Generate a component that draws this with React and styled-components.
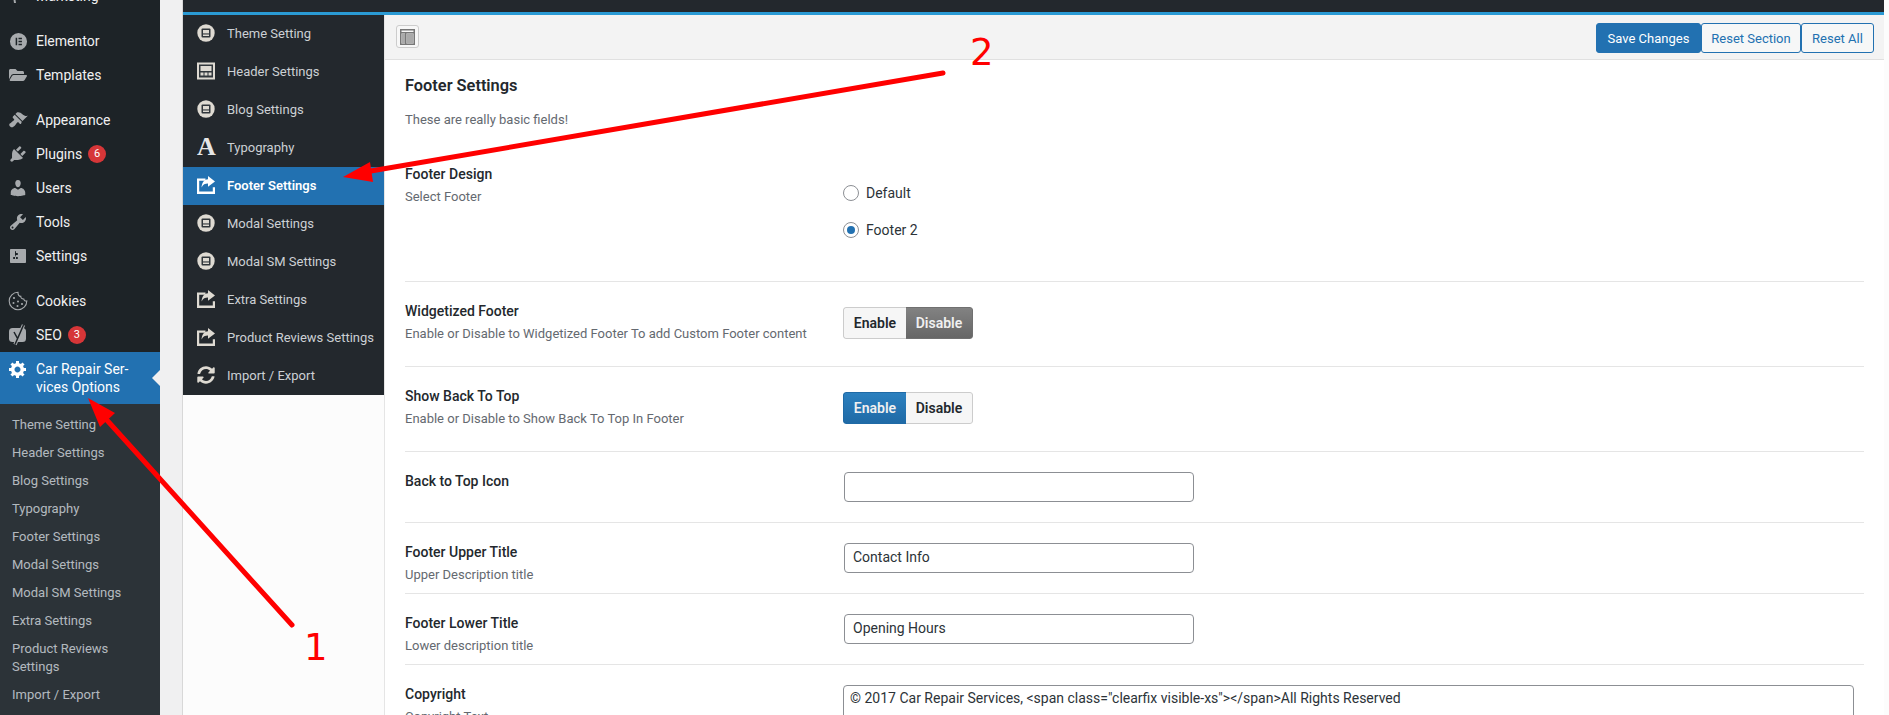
import React from 'react'
import styled, { createGlobalStyle } from 'styled-components'
import { FaFolderOpen, FaSyncAlt } from 'react-icons/fa'

const GlobalStyle = createGlobalStyle`
    html, body {
        margin: 0;
        height: 100%;
        overflow: hidden;
        background: #f0f0f1;
        font-family: Roboto, "Liberation Sans", sans-serif;
    }
    * {
        box-sizing: border-box;
    }
`

const Page = styled.div`
    position: relative;
    display: flex;
    width: 1889px;
    height: 715px;
    overflow: hidden;
`

const AdminMenu = styled.nav`
    flex: 0 0 160px;
    height: 736px;
    margin-top: -21px;
    background: #1d2327;
`

const MenuItem = styled.div`
    position: relative;
    display: flex;
    margin-top: ${(p) => (p.$sep ? '11px' : '0')};
    padding: 8px 0;
    font-size: 14px;
    line-height: 18px;
    color: ${(p) => (p.$active ? '#fff' : '#f0f0f1')};
    background: ${(p) => (p.$active ? '#2271b1' : 'transparent')};
`

const MenuIcon = styled.span`
    flex: 0 0 36px;
    display: flex;
    justify-content: center;
    align-items: center;
    height: 18px;
    color: ${(p) => (p.$active ? '#fff' : '#a7aaad')};
    svg {
        display: block;
        fill: currentColor;
    }
`

const Badge = styled.span`
    display: inline-block;
    width: 18px;
    height: 18px;
    margin-left: 6px;
    border-radius: 50%;
    background: #d63638;
    color: #fff;
    font-size: 11px;
    line-height: 18px;
    text-align: center;
    vertical-align: top;
`

const CurrentArrow = styled.span`
    position: absolute;
    right: 0;
    top: 18px;
    border: 8px solid transparent;
    border-right-color: #f0f0f1;
    border-left-width: 0;
`

const SubMenu = styled.div`
    padding: 7px 0;
    background: #2c3338;
`

const SubItem = styled.div`
    padding: 5px 12px;
    font-size: 13px;
    line-height: 18px;
    color: rgba(240, 246, 252, 0.7);
`

const Panel = styled.main`
    flex: 0 0 1702px;
    margin-left: 22px;
    height: 715px;
    border-left: 1px solid #d8d8d8;
    background: #fcfcfc;
`

const Gutter = styled.div`
    flex: 1;
    background: #fcfcfc;
`

const PanelTop = styled.div`
    height: 15px;
    background: #23282d;
    border-bottom: 3px solid #2a9ad4;
`

const PanelBody = styled.div`
    display: flex;
    align-items: flex-start;
`

const Sidebar = styled.ul`
    flex: 0 0 201px;
    margin: 0;
    padding: 0;
    list-style: none;
    background: #23282d;
`

const SideItem = styled.li`
    display: flex;
    align-items: center;
    height: 38px;
    padding: 0 0 2px 14px;
    font-size: 13px;
    font-weight: ${(p) => (p.$active ? 600 : 400)};
    color: ${(p) => (p.$active ? '#fff' : '#ccd0d4')};
    background: ${(p) => (p.$active ? '#2271b1' : 'transparent')};
`

const SideIcon = styled.span`
    flex: 0 0 30px;
    height: 18px;
    display: flex;
    align-items: center;
    color: ${(p) => (p.$active ? '#fff' : '#dedad2')};
    svg {
        display: block;
    }
`

const TypeGlyph = styled.span`
    width: 18px;
    font-family: "Liberation Serif", serif;
    font-weight: 700;
    font-size: 26px;
    line-height: 18px;
    text-align: center;
    color: #e6e6e6;
`

const Content = styled.section`
    flex: 1;
    min-width: 0;
    height: 700px;
    border-left: 1px solid #e5e5e5;
    background: #fff;
`

const ActionBar = styled.div`
    display: flex;
    align-items: center;
    justify-content: space-between;
    height: 45px;
    padding: 2px 10px 0 11px;
    background: #f3f3f3;
    border-bottom: 1px solid #e0e0e0;
`

const LayoutToggle = styled.span`
    display: flex;
    align-items: center;
    justify-content: center;
    width: 23px;
    height: 23px;
    margin-top: -3px;
    border: 1px solid #ccc;
    border-radius: 3px;
    background: #f7f7f7;
    color: #777;
`

const Actions = styled.div`
    display: flex;
`

const ActionButton = styled.button`
    height: 30px;
    width: ${(p) => p.$w}px;
    padding: 0;
    font-family: inherit;
    font-size: 13px;
    border: 1px solid #2271b1;
    border-radius: 3px;
    color: ${(p) => (p.$primary ? '#fff' : '#2271b1')};
    background: ${(p) => (p.$primary ? '#2271b1' : '#f6f7f7')};
`

const Section = styled.div`
    padding: 16px 20px 0;
`

const SectionTitle = styled.h2`
    margin: 0;
    font-size: 16.38px;
    font-weight: 600;
    line-height: 20px;
    color: #23282d;
`

const SectionNote = styled.p`
    margin: 15px 0 16px;
    font-size: 13px;
    line-height: 18px;
    color: #646970;
`

const Row = styled.div`
    display: grid;
    grid-template-columns: 438px 1fr;
    height: ${(p) => p.$h}px;
    border-bottom: ${(p) => (p.$last ? '0' : '1px solid #e5e5e5')};
`

const LabelCell = styled.div`
    padding-top: 19px;
`

const Label = styled.div`
    font-size: 14px;
    font-weight: 500;
    line-height: 20px;
    color: #23282d;
`

const Hint = styled.div`
    margin-top: 4px;
    font-size: 13px;
    line-height: 18px;
    color: #646970;
`

const FieldCell = styled.div`
    padding-top: ${(p) => p.$top}px;
`

const RadioLine = styled.label`
    display: flex;
    align-items: center;
    height: 37px;
    font-size: 14px;
    color: #2c3338;
`

const Radio = styled.input`
    appearance: none;
    display: flex;
    align-items: center;
    justify-content: center;
    width: 16px;
    height: 16px;
    margin: 0 7px 0 0;
    border: 1px solid #8c8f94;
    border-radius: 50%;
    background: #fff;
    &:checked::before {
        content: '';
        width: 8px;
        height: 8px;
        border-radius: 50%;
        background: #2271b1;
    }
`

const Toggle = styled.div`
    display: inline-flex;
    width: 130px;
    height: 32px;
    border-radius: 3px;
    overflow: hidden;
`

const ToggleSide = styled.span`
    flex: ${(p) => (p.$first ? '0 0 63px' : '1')};
    display: flex;
    align-items: center;
    justify-content: center;
    font-size: 14px;
    font-weight: 600;
    border: 1px solid #ccc;
    ${(p) => (p.$first ? 'border-right: 0; border-radius: 3px 0 0 3px;' : 'border-left: 0; border-radius: 0 3px 3px 0;')}
    color: ${(p) => (p.$tone ? '#f0f0f0' : '#23282d')};
    background: ${(p) =>
        p.$tone === 'blue'
            ? 'linear-gradient(#2c80bf, #1f6aa6)'
            : p.$tone === 'gray'
              ? 'linear-gradient(#828282, #666)'
              : '#f6f6f6'};
    border-color: ${(p) =>
        p.$tone === 'blue' ? '#1f6aa6' : p.$tone === 'gray' ? '#707070' : '#ccc'};
`

const TextField = styled.input`
    display: block;
    width: 350px;
    height: 30px;
    margin-left: 1px;
    padding: 0 8px 2px;
    font-family: inherit;
    font-size: 14px;
    color: #2c3338;
    background: #fff;
    border: 1px solid #8c8f94;
    border-radius: 4px;
    outline: none;
`

const TextArea = styled.textarea`
    display: block;
    width: 1011px;
    height: 90px;
    padding: 2px 6px;
    font-family: inherit;
    font-size: 14px;
    line-height: 20px;
    color: #2c3338;
    background: #fff;
    border: 1px solid #8c8f94;
    border-radius: 4px;
    outline: none;
    resize: none;
`

const Overlay = styled.svg`
    position: absolute;
    inset: 0;
    pointer-events: none;
`

const Callout = styled.span`
    position: absolute;
    left: ${(p) => p.$x}px;
    top: ${(p) => p.$y}px;
    font-family: "DejaVu Sans", sans-serif;
    font-size: 37px;
    line-height: 40px;
    color: #f00;
`

const Dash = ({ d, size = 20 }) => (
    <svg width={size} height={size} viewBox='0 0 20 20'>
        <path d={d} />
    </svg>
)

const ElementorIcon = () => (
    <svg width='19' height='19' viewBox='0 0 20 20'>
        <path
            fillRule='evenodd'
            d='M10 1a9 9 0 1 0 0 18 9 9 0 0 0 0-18zM7 6h1.6v8H7zm3 0h3.6v1.6H10zm0 3.2h3.6v1.6H10zm0 3.2h3.6V14H10z'
        />
    </svg>
)

const CookieIcon = () => (
    <svg width='20' height='20' viewBox='0 0 20 20' style={{ fill: 'none' }}>
        <path
            d='M10 1.2a8.8 8.8 0 1 0 8.8 8.8c-1.5.3-2.8-.5-3-2-1.7.2-3-.9-3-2.6-1.7 0-3-1.4-2.8-4.2z'
            stroke='currentColor'
            strokeWidth='1.1'
        />
        <g fill='currentColor'>
            <circle cx='6' cy='7' r='1.1' />
            <circle cx='5.5' cy='12' r='1' />
            <circle cx='10' cy='10.5' r='1' />
            <circle cx='9.5' cy='15' r='1' />
            <circle cx='14' cy='13' r='1.1' />
        </g>
    </svg>
)

const SeoIcon = () => (
    <svg width='20' height='22' viewBox='0 0 20 22' style={{ fill: 'none' }}>
        <rect x='1' y='4' width='17' height='14' rx='3.5' fill='currentColor' />
        <path d='M6 8l3.6 6.5L15.5 1M9.6 14.5L7 20.5' stroke='currentColor' strokeWidth='3.4' />
        <path d='M6 8l3.6 6.5L15.5 1M9.6 14.5L7 20.5' stroke='#1d2327' strokeWidth='1.5' />
    </svg>
)

const menuTop = [
    { label: 'Marketing', icon: <Dash d='M10 2 3 8v2h2l1 7h2l-1-6h3l6 3V4l-6 3H7z' /> },
    { label: 'Elementor', icon: <ElementorIcon />, sep: true },
    { label: 'Templates', icon: <FaFolderOpen size={18} /> },
    {
        label: 'Appearance',
        sep: true,
        icon: <Dash d='M14.48 11.06L7.41 3.99l1.5-1.5c.5-.56 2.3-.47 3.51.32 1.21.8 1.43 1.28 2.91 2.1 1.18.64 2.45 1.26 4.45.85zm-.71.71L6.7 4.7 4.93 6.47c-.39.39-.39 1.02 0 1.41l1.06 1.06c.39.39.39 1.03 0 1.42-.6.6-1.43 1.11-2.21 1.69-.35.26-.7.53-1.01.84C1.43 13.23.5 14.81 2.14 16.45c1.63 1.63 3.22.7 4.56-.63.3-.31.57-.66.84-1.01.58-.78 1.09-1.61 1.69-2.21.39-.39 1.02-.39 1.41 0l1.06 1.06c.39.39 1.02.39 1.41 0z' />,
    },
    {
        label: 'Plugins',
        badge: 6,
        icon: <Dash d='M13.11 4.36L9.87 7.6 8 5.73l3.24-3.24c.35-.34 1.05-.2 1.56.32.52.51.66 1.21.31 1.55zm-8 1.77l.91-1.12 9.01 9.01-1.19.84c-.71.71-2.63 1.16-3.82 1.16H6.14L4.9 17.26c-.59.59-1.54.59-2.12 0-.59-.58-.59-1.53 0-2.12l1.24-1.24v-3.88c0-1.13.4-3.19 1.09-3.89zm7.26 3.97l3.24-3.24c.34-.35 1.04-.21 1.55.31.52.51.66 1.21.31 1.55l-3.24 3.25z' />,
    },
    {
        label: 'Users',
        icon: <Dash d='M10 9.25c-2.27 0-2.73-3.44-2.73-3.44C7 4.02 7.82 2 9.97 2c2.16 0 2.98 2.02 2.71 3.81 0 0-.41 3.44-2.68 3.44zm0 2.57L12.72 10c2.39 0 4.52 2.33 4.52 4.53v2.49s-3.65 1.13-7.24 1.13c-3.65 0-7.24-1.13-7.24-1.13v-2.49c0-2.25 1.94-4.48 4.47-4.48z' />,
    },
    {
        label: 'Tools',
        icon: <Dash d='M16.68 9.77c-1.34 1.34-3.3 1.67-4.95.99l-5.41 6.52c-.99.99-2.59.99-3.58 0s-.99-2.59 0-3.57l6.52-5.42c-.68-1.65-.35-3.61.99-4.95 1.28-1.28 3.12-1.62 4.72-1.06l-2.89 2.89 2.82 2.82 2.86-2.87c.53 1.58.18 3.39-1.08 4.65zM3.81 16.21c.4.39 1.04.39 1.43 0 .4-.4.4-1.04 0-1.43-.39-.4-1.03-.4-1.43 0-.39.39-.39 1.03 0 1.43z' />,
    },
    {
        label: 'Settings',
        icon: <Dash d='M18 16V4c0-.55-.45-1-1-1H3c-.55 0-1 .45-1 1v12c0 .55.45 1 1 1h14c.55 0 1-.45 1-1zM8 11h1c.55 0 1 .45 1 1s-.45 1-1 1H8v1.5c0 .28-.22.5-.5.5s-.5-.22-.5-.5V13H6c-.55 0-1-.45-1-1s.45-1 1-1h1V5.5c0-.28.22-.5.5-.5s.5.22.5.5V7h1c.55 0 1 .45 1 1s-.45 1-1 1h-1v5.5c0 .28-.22.5-.5.5s-.5-.22-.5-.5V9z' />,
    },
    { label: 'Cookies', icon: <CookieIcon />, sep: true },
    { label: 'SEO', badge: 3, icon: <SeoIcon /> },
]

const subItems = [
    'Theme Setting',
    'Header Settings',
    'Blog Settings',
    'Typography',
    'Footer Settings',
    'Modal Settings',
    'Modal SM Settings',
    'Extra Settings',
    'Product Reviews Settings',
    'Import / Export',
]

const ScreenIcon = () => (
    <svg width='18' height='18' viewBox='0 0 18 18'>
        <circle cx='9' cy='9' r='8.7' fill='currentColor' />
        <rect x='4.5' y='4.5' width='9' height='9' rx='1' fill='#30363b' />
        <rect x='6' y='6' width='6' height='3.4' fill='#dedad2' />
        <rect x='6' y='10.5' width='6' height='1.5' fill='#dedad2' />
    </svg>
)

const HeaderIcon = () => (
    <svg width='18' height='18' viewBox='0 0 18 18'>
        <rect width='18' height='17' y='0.5' fill='currentColor' />
        <rect x='2' y='2.5' width='14' height='13' fill='#30363b' />
        <rect x='3.5' y='4' width='11' height='5' fill='currentColor' />
        <rect x='3.5' y='10.5' width='3' height='3' fill='currentColor' />
        <rect x='7.5' y='10.5' width='3' height='3' fill='currentColor' />
        <rect x='11.5' y='10.5' width='3' height='3' fill='currentColor' />
    </svg>
)

const ShareIcon = () => (
    <svg width='18' height='18' viewBox='0 0 18 18' fill='currentColor'>
        <path d='M0 2.5h8.5v2.2H2.2v10.8h13.6v-4.2H18V18H0z' />
        <path d='M11 0l7 5.4-7 5.4V7.6C8 7.6 6 8.4 4.6 11.6 4.7 7 7 3.4 11 3.2z' />
    </svg>
)

const sideItems = [
    { label: 'Theme Setting', icon: <ScreenIcon /> },
    { label: 'Header Settings', icon: <HeaderIcon /> },
    { label: 'Blog Settings', icon: <ScreenIcon /> },
    { label: 'Typography', icon: <TypeGlyph>A</TypeGlyph> },
    { label: 'Footer Settings', icon: <ShareIcon />, active: true },
    { label: 'Modal Settings', icon: <ScreenIcon /> },
    { label: 'Modal SM Settings', icon: <ScreenIcon /> },
    { label: 'Extra Settings', icon: <ShareIcon /> },
    { label: 'Product Reviews Settings', icon: <ShareIcon /> },
    { label: 'Import / Export', icon: <FaSyncAlt size={18} /> },
]

const GEAR =
    'M18 12h-2.18c-.17.7-.44 1.35-.81 1.93l1.54 1.54-2.1 2.1-1.54-1.54c-.58.36-1.23.63-1.91.79V19H8v-2.18c-.68-.16-1.33-.43-1.91-.79l-1.54 1.54-2.12-2.12 1.54-1.54c-.36-.58-.63-1.23-.79-1.91H1V9.03h2.17c.16-.7.44-1.35.8-1.94L2.43 5.55l2.1-2.1 1.54 1.54c.58-.37 1.24-.64 1.93-.81V2h3v2.18c.68.16 1.33.43 1.91.79l1.54-1.54 2.12 2.12-1.54 1.54c.36.59.64 1.24.8 1.94H18V12zm-8.5 1.5c1.66 0 3-1.34 3-3s-1.34-3-3-3-3 1.34-3 3 1.34 3 3 3z'

const App = () => {
    return (
        <Page>
            <GlobalStyle />
            <AdminMenu>
                {menuTop.map((item) => (
                    <MenuItem key={item.label} $sep={item.sep}>
                        <MenuIcon>{item.icon}</MenuIcon>
                        <span>
                            {item.label}
                            {item.badge && <Badge>{item.badge}</Badge>}
                        </span>
                    </MenuItem>
                ))}
                <MenuItem $active>
                    <MenuIcon $active>
                        <Dash d={GEAR} />
                    </MenuIcon>
                    <span>
                        Car Repair Ser-
                        <br />
                        vices Options
                    </span>
                    <CurrentArrow />
                </MenuItem>
                <SubMenu>
                    {subItems.map((label) => (
                        <SubItem key={label}>{label}</SubItem>
                    ))}
                </SubMenu>
            </AdminMenu>

            <Panel>
                <PanelTop />
                <PanelBody>
                    <Sidebar>
                        {sideItems.map((item) => (
                            <SideItem key={item.label} $active={item.active}>
                                <SideIcon $active={item.active}>{item.icon}</SideIcon>
                                {item.label}
                            </SideItem>
                        ))}
                    </Sidebar>
                    <Content>
                        <ActionBar>
                            <LayoutToggle>
                                <svg width='15' height='16' viewBox='0 0 15 16'>
                                    <path
                                        fill='currentColor'
                                        fillRule='evenodd'
                                        d='M0 0h15v16H0zM1.5 1.5v1.5h12V1.5zM1.5 4.5v10H5v-10zM6.5 4.5v10h7v-10z'
                                    />
                                    <path fill='#aaa' d='M1.5 4.5H5v10H1.5zM6.5 4.5h7v10h-7z' />
                                </svg>
                            </LayoutToggle>
                            <Actions>
                                <ActionButton $primary $w={105}>
                                    Save Changes
                                </ActionButton>
                                <ActionButton $w={100}>Reset Section</ActionButton>
                                <ActionButton $w={73}>Reset All</ActionButton>
                            </Actions>
                        </ActionBar>
                        <Section>
                            <SectionTitle>Footer Settings</SectionTitle>
                            <SectionNote>These are really basic fields!</SectionNote>

                            <Row $h={137}>
                                <LabelCell>
                                    <Label>Footer Design</Label>
                                    <Hint>Select Footer</Hint>
                                </LabelCell>
                                <FieldCell $top={29}>
                                    <RadioLine>
                                        <Radio type='radio' name='footer' readOnly />
                                        Default
                                    </RadioLine>
                                    <RadioLine>
                                        <Radio type='radio' name='footer' defaultChecked />
                                        Footer 2
                                    </RadioLine>
                                </FieldCell>
                            </Row>

                            <Row $h={85}>
                                <LabelCell>
                                    <Label>Widgetized Footer</Label>
                                    <Hint>
                                        Enable or Disable to Widgetized Footer To add Custom Footer
                                        content
                                    </Hint>
                                </LabelCell>
                                <FieldCell $top={25}>
                                    <Toggle>
                                        <ToggleSide $first>Enable</ToggleSide>
                                        <ToggleSide $tone='gray'>Disable</ToggleSide>
                                    </Toggle>
                                </FieldCell>
                            </Row>

                            <Row $h={85}>
                                <LabelCell>
                                    <Label>Show Back To Top</Label>
                                    <Hint>Enable or Disable to Show Back To Top In Footer</Hint>
                                </LabelCell>
                                <FieldCell $top={25}>
                                    <Toggle>
                                        <ToggleSide $first $tone='blue'>
                                            Enable
                                        </ToggleSide>
                                        <ToggleSide>Disable</ToggleSide>
                                    </Toggle>
                                </FieldCell>
                            </Row>

                            <Row $h={71}>
                                <LabelCell>
                                    <Label>Back to Top Icon</Label>
                                </LabelCell>
                                <FieldCell $top={20}>
                                    <TextField defaultValue='' />
                                </FieldCell>
                            </Row>

                            <Row $h={71}>
                                <LabelCell>
                                    <Label>Footer Upper Title</Label>
                                    <Hint>Upper Description title</Hint>
                                </LabelCell>
                                <FieldCell $top={20}>
                                    <TextField defaultValue='Contact Info' />
                                </FieldCell>
                            </Row>

                            <Row $h={71}>
                                <LabelCell>
                                    <Label>Footer Lower Title</Label>
                                    <Hint>Lower description title</Hint>
                                </LabelCell>
                                <FieldCell $top={20}>
                                    <TextField defaultValue='Opening Hours' />
                                </FieldCell>
                            </Row>

                            <Row $h={120} $last>
                                <LabelCell>
                                    <Label>Copyright</Label>
                                    <Hint>Copyright Text</Hint>
                                </LabelCell>
                                <FieldCell $top={20}>
                                    <TextArea defaultValue='© 2017 Car Repair Services, <span class="clearfix visible-xs"></span>All Rights Reserved' />
                                </FieldCell>
                            </Row>
                        </Section>
                    </Content>
                </PanelBody>
            </Panel>
            <Gutter />

            <Overlay width='1889' height='715' viewBox='0 0 1889 715'>
                <g fill='#f00' stroke='#f00'>
                    <line x1='292' y1='625' x2='105' y2='418' strokeWidth='5' strokeLinecap='round' />
                    <polygon points='88,398 115,413 100,427' strokeWidth='0' />
                    <line x1='943' y1='73' x2='365' y2='172' strokeWidth='5' strokeLinecap='round' />
                    <polygon points='343,177 370,162 373,182' strokeWidth='0' />
                </g>
            </Overlay>
            <Callout $x={304} $y={628}>1</Callout>
            <Callout $x={970} $y={33}>2</Callout>
        </Page>
    )
}

export default App
